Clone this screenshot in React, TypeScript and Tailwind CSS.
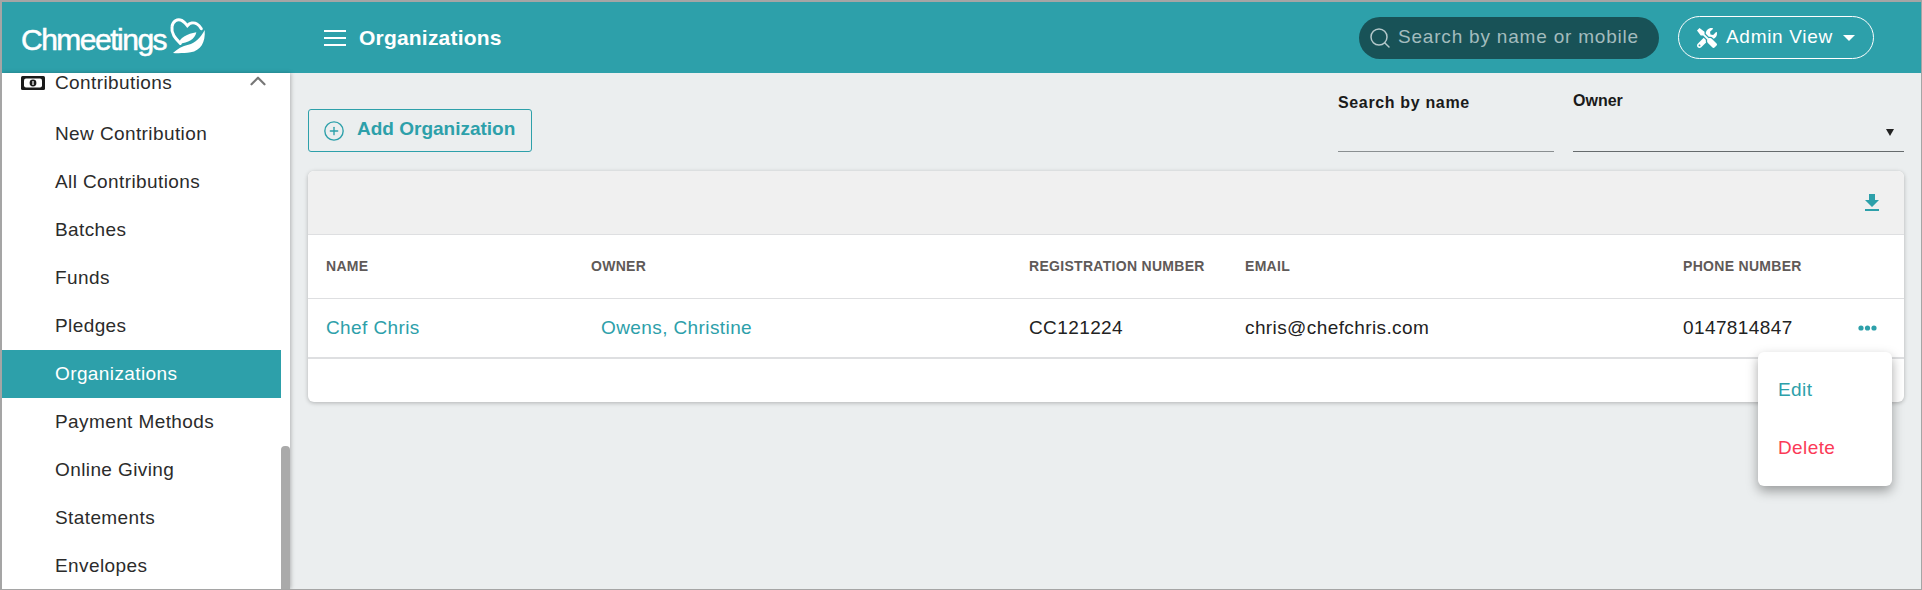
import React from 'react';
import { ChevronUp, CirclePlus, Search } from 'lucide-react';
import { FaTools } from 'react-icons/fa';
import { MdFileDownload } from 'react-icons/md';

const sidebarItems = [
  'New Contribution',
  'All Contributions',
  'Batches',
  'Funds',
  'Pledges',
  'Organizations',
  'Payment Methods',
  'Online Giving',
  'Statements',
  'Envelopes',
];

const Logo = () => (
  <div className="flex items-start h-[71px] ml-[19px]">
    <span className="text-[30px] leading-[34px] mt-[21px] font-medium tracking-[-1.5px] text-white [-webkit-text-stroke:0.5px_white]">
      Chmeetings
    </span>
    <svg viewBox="0 0 180 150" className="w-[60px] h-[50px] mt-[12px] -ml-[7px] shrink-0" fill="none">
      <path
        d="M64 88C48 72 36 58 39 38 41 22 55 13 68 19 75 23 80 28 85 35 92 27 104 24 114 30 120 33 124 39 127 44"
        stroke="white"
        strokeWidth="9"
        strokeLinecap="round"
      />
      <path d="M42 117C55 105 70 95 88 92 110 88 125 70 137 48 140 85 125 110 95 115 75 118 55 118 42 117Z" fill="white" />
      <path d="M60 89C62 70 85 60 112 55 108 75 88 88 60 89Z" fill="white" />
    </svg>
  </div>
);

const MoneyIcon = () => (
  <svg viewBox="0 0 24 14" className="w-[24px] h-[14px] shrink-0">
    <rect x="0" y="0" width="24" height="14" rx="1.5" fill="#1a1a1a" />
    <rect x="3" y="2.5" width="18" height="9" rx="2" fill="white" />
    <circle cx="12" cy="7" r="3.4" fill="#1a1a1a" />
    <rect x="11.4" y="5" width="1.2" height="4" fill="white" />
  </svg>
);

export default function App() {
  return (
    <div className="h-[590px] flex flex-col overflow-hidden border-t-2 border-l-2 border-r border-b border-[#a5a5a5] bg-[#ebeeef] font-['Liberation_Sans',Arial,sans-serif]">
      {/* Header */}
      <header className="h-[71px] shrink-0 flex items-center bg-[#2da0aa] text-white">
        <div className="w-[320px] shrink-0">
          <Logo />
        </div>
        <svg viewBox="0 0 22 18" className="w-[22px] h-[18px] ml-[2px]" stroke="white" strokeWidth="2">
          <path d="M0 2h22M0 9h22M0 16h22" />
        </svg>
        <h1 className="ml-[13px] text-[21px] font-bold tracking-[0.2px]">Organizations</h1>
        <div className="ml-auto flex items-center mr-[47px]">
          <div className="w-[300px] h-[42px] rounded-full bg-[#185257] flex items-center pl-[9px]">
            <Search className="w-[24px] h-[24px] text-[#b4c8ca]" strokeWidth={1.5} />
            <span className="ml-[6px] text-[19px] tracking-[0.8px] text-[#a3bcbe] whitespace-nowrap">Search by name or mobile</span>
          </div>
          <button className="ml-[19px] w-[196px] h-[43px] rounded-full border border-white flex items-center pl-[18px]">
            <FaTools className="w-[20px] h-[20px]" />
            <span className="ml-[9px] text-[19px] tracking-[0.7px]">Admin View</span>
            <span className="ml-[10px] w-0 h-0 border-x-[6px] border-x-transparent border-t-[6px] border-t-white" />
          </button>
        </div>
      </header>

      <div className="flex-1 flex min-h-0">
        {/* Sidebar */}
        <aside className="w-[288px] shrink-0 flex bg-white shadow-[1px_0_4px_rgba(0,0,0,0.25)] z-10">
          <nav className="w-[279px] overflow-hidden text-[19px] tracking-[0.4px] text-[#2b2b2b]">
            <div className="h-[37px] pb-[18px] flex items-center pl-[19px] pr-[10px]">
              <MoneyIcon />
              <span className="ml-[10px] flex-1 leading-[19px]">Contributions</span>
              <ChevronUp className="w-[26px] h-[26px] -mt-[4px] text-[#777777]" />
            </div>
            {sidebarItems.map((item) => (
              <div
                key={item}
                className={`h-[48px] flex items-center pl-[53px] ${
                  item === 'Organizations' ? 'bg-[#2da0aa] text-white' : ''
                }`}
              >
                {item}
              </div>
            ))}
          </nav>
          <div className="w-[9px] pt-[373px]">
            <div className="h-full bg-[#aaaaaa] rounded-t-[4px]" />
          </div>
        </aside>

        {/* Main content */}
        <main className="flex-1 min-w-0 pl-[18px] pr-[17px] relative">
          <div className="h-[98px] flex items-start">
            <button className="mt-[36px] w-[224px] h-[43px] flex items-center pl-[14px] pb-[2px] rounded-[3px] border border-[#2da0aa] text-[#2da0aa] font-bold text-[19px]">
              <CirclePlus className="w-[22px] h-[22px] mt-[2px]" strokeWidth={1.5} />
              <span className="ml-[12px]">Add Organization</span>
            </button>
            <div className="ml-auto mt-[18px] w-[216px] h-[61px] border-b border-[#8a8f91]">
              <div className="text-[16px] font-bold tracking-[0.65px] text-[#1a1a1a]">Search by name</div>
            </div>
            <div className="ml-[19px] mt-[16px] w-[331px] h-[63px] border-b border-[#666b6d] flex flex-col">
              <div className="text-[16px] font-bold text-[#1a1a1a]">Owner</div>
              <span className="self-end mt-[16px] mr-[10px] w-0 h-0 border-x-[4px] border-x-transparent border-t-[7px] border-t-[#222222]" />
            </div>
          </div>

          {/* Card */}
          <section className="rounded-[6px] bg-white shadow-[0_1px_4px_rgba(0,0,0,0.25)] overflow-hidden">
            <div className="h-[64px] bg-[#f0f0f0] border-b border-[#dedfe1] flex items-center justify-end pr-[20px]">
              <MdFileDownload className="w-[24px] h-[24px] text-[#2da0aa]" />
            </div>
            <div className="h-[64px] border-b border-[#dedfe1] grid grid-cols-[265px_438px_216px_438px_1fr] items-center pl-[18px] text-[14px] font-bold tracking-[0.3px] text-[#5f5a58]">
              <span>NAME</span>
              <span>OWNER</span>
              <span>REGISTRATION NUMBER</span>
              <span>EMAIL</span>
              <span>PHONE NUMBER</span>
            </div>
            <div className="h-[60px] border-b-2 border-[#dedfe1] grid grid-cols-[265px_438px_216px_438px_1fr] items-center pl-[18px] text-[19px] tracking-[0.4px] text-[#222222]">
              <span className="text-[#2da0aa]">Chef Chris</span>
              <span className="pl-[10px] text-[#2da0aa]">Owens, Christine</span>
              <span>CC121224</span>
              <span>chris@chefchris.com</span>
              <span className="flex items-center justify-between pr-[27px]">
                0147814847
                <svg viewBox="0 0 19 6" className="w-[19px] h-[6px]" fill="#2da0aa">
                  <circle cx="3" cy="3" r="2.6" />
                  <circle cx="9.5" cy="3" r="2.6" />
                  <circle cx="16" cy="3" r="2.6" />
                </svg>
              </span>
            </div>
            <div className="h-[43px]" />
          </section>

          {/* Row menu */}
          <div className="absolute right-[29px] top-[279px] w-[134px] h-[134px] rounded-[6px] bg-white shadow-[0_5px_12px_rgba(0,0,0,0.35)] flex flex-col justify-center pl-[20px] text-[19px] tracking-[0.4px]">
            <div className="h-[58px] flex items-center text-[#2da0aa]">Edit</div>
            <div className="h-[58px] flex items-center text-[#fb3a57]">Delete</div>
          </div>
        </main>
      </div>
    </div>
  );
}
